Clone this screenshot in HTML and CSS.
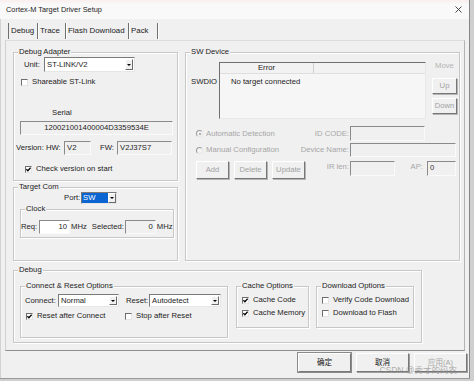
FILE: index.html
```html
<!DOCTYPE html>
<html lang="en">
<head>
  <meta charset="UTF-8">
  <title>Cortex-M Target Driver Setup</title>
  <link rel="stylesheet" href="styles.css">
</head>
<body>
  <div class="window">
    <div class="titlebar">
      <span>Cortex-M Target Driver Setup</span>
      <svg class="close" width="7" height="7" viewBox="0 0 7 7"><path d="M0.5 0.5 L6.5 6.5 M6.5 0.5 L0.5 6.5"/></svg>
    </div>

    <div class="tabs">
      <span class="tab active tab-debug">Debug</span>
      <span class="tab tab-trace">Trace</span>
      <span class="tab tab-flash">Flash Download</span>
      <span class="tab tab-pack">Pack</span>
    </div>

    <div class="panel">
      <div class="columns">
        <div class="col-left">
          <!-- Debug Adapter -->
          <div class="group adapter">
            <span class="legend">Debug Adapter</span>
            <div class="row unit-row">
              <span class="unit-lbl">Unit:</span>
              <div class="select unit-select"><span class="value">ST-LINK/V2</span><span class="arrow"></span></div>
            </div>
            <div class="check share-row"><span class="cb"></span>Shareable ST-Link</div>
            <div class="serial-lbl">Serial</div>
            <div class="field serial">120021001400004D3359534E</div>
            <div class="row version-row">
              <span class="version-lbl">Version: HW:</span>
              <div class="field hw">V2</div>
              <span class="fw-lbl">FW:</span>
              <div class="field fw">V2J37S7</div>
            </div>
            <div class="check verify-row">
              <span class="cb"><svg viewBox="0 0 5 5"><path d="M0.4 2.2 L1.9 3.8 L4.6 0.7"/></svg></span>Check version on start
            </div>
          </div>

          <!-- Target Com -->
          <div class="group target-com">
            <span class="legend">Target Com</span>
            <div class="row port-row">
              <span class="port-lbl">Port:</span>
              <div class="select port-select"><span class="value"><span class="picked">SW</span></span><span class="arrow"></span></div>
            </div>
            <div class="group clock">
              <span class="legend">Clock</span>
              <div class="row req-row">
                <span class="req-lbl">Req:</span>
                <div class="field input num">10</div>
                <span class="unit">MHz</span>
                <span class="sel-lbl">Selected:</span>
                <div class="field num">0</div>
                <span class="unit">MHz</span>
              </div>
            </div>
          </div>
        </div>

        <!-- SW Device -->
        <div class="group sw-device">
          <span class="legend">SW Device</span>
          <div class="sw-top">
            <span class="swdio-lbl">SWDIO</span>
            <div class="sw-table">
              <div class="sw-head"><span class="col-error">Error</span><span class="col-rest"></span></div>
              <div class="sw-line">No target connected</div>
            </div>
            <div class="sw-btns">
              <span class="btn ghost move">Move</span>
              <span class="btn up">Up</span>
              <span class="btn down">Down</span>
            </div>
          </div>
          <div class="sw-row row-a">
            <span class="opt"><span class="rb on"></span>Automatic Detection</span>
            <span class="flbl id-lbl">ID CODE:</span>
            <div class="field id-box"></div>
          </div>
          <div class="sw-row row-b">
            <span class="opt"><span class="rb"></span>Manual Configuration</span>
            <span class="flbl id-lbl">Device Name:</span>
            <div class="field name-box"></div>
          </div>
          <div class="sw-row row-c">
            <span class="opt-btns">
              <span class="btn act">Add</span>
              <span class="btn act">Delete</span>
              <span class="btn act">Update</span>
            </span>
            <span class="flbl ir-lbl">IR len:</span>
            <div class="field ir-box"></div>
            <span class="flbl ap-lbl">AP:</span>
            <div class="field ap-box">0</div>
          </div>
        </div>
      </div>

      <!-- Debug -->
      <div class="group debug">
        <span class="legend">Debug</span>
        <div class="group conn">
          <span class="legend">Connect &amp; Reset Options</span>
          <div class="row conn-row">
            <span class="conn-lbl">Connect:</span>
            <div class="select conn-select"><span class="value">Normal</span><span class="arrow"></span></div>
            <span class="reset-lbl">Reset:</span>
            <div class="select reset-select"><span class="value">Autodetect</span><span class="arrow"></span></div>
          </div>
          <div class="row conn-checks">
            <span class="check first"><span class="cb"><svg viewBox="0 0 5 5"><path d="M0.4 2.2 L1.9 3.8 L4.6 0.7"/></svg></span>Reset after Connect</span>
            <span class="check"><span class="cb"></span>Stop after Reset</span>
          </div>
        </div>
        <div class="group small cache">
          <span class="legend">Cache Options</span>
          <div class="check"><span class="cb"><svg viewBox="0 0 5 5"><path d="M0.4 2.2 L1.9 3.8 L4.6 0.7"/></svg></span>Cache Code</div>
          <div class="check"><span class="cb"><svg viewBox="0 0 5 5"><path d="M0.4 2.2 L1.9 3.8 L4.6 0.7"/></svg></span>Cache Memory</div>
        </div>
        <div class="group small download">
          <span class="legend">Download Options</span>
          <div class="check"><span class="cb"></span>Verify Code Download</div>
          <div class="check"><span class="cb"></span>Download to Flash</div>
        </div>
      </div>
    </div>

    <div class="buttons">
      <span class="btn dlg default">确定</span>
      <span class="btn dlg">取消</span>
      <span class="btn dlg off">应用(A)</span>
    </div>

    <span class="watermark">CSDN @秀才的码农</span>
  </div>
</body>
</html>
```

FILE: styles.css
```css
* {
  box-sizing: border-box;
  margin: 0;
  padding: 0;
}

body {
  background: #cfcfcf;
  font-family: "Liberation Sans", "Noto Sans CJK SC", Arial, sans-serif;
  font-size: 7.7px;
  line-height: 10px;
  color: #1c1c1c;
}

/* Dialog window */
.window {
  position: relative;
  width: 470px;
  height: 379px;
  background: #f0f0f0;
  border-right: 1px solid #858585;
  border-bottom: 1px solid #9a9a9a;
  box-shadow: inset 1px 0 #d2d2d2;
}

.titlebar {
  height: 19px;
  display: flex;
  align-items: center;
  justify-content: space-between;
  padding: 0 6px 0 6px;
  font-size: 7.4px;
  background: linear-gradient(#fbeeee, #f9f9f9 4px);
}

.close {
  margin-right: 1px;
  & path {
    stroke: #333;
    stroke-width: 0.9;
  }
}

/* Tabs */
.tabs {
  height: 21px;
  display: flex;
  align-items: flex-end;
  padding-left: 8px;
  padding-bottom: 1px;
}

.tab {
  height: 16px;
  line-height: 15px;
  padding-left: 2px;
  border-right: 1px solid #6f6f6f;
  box-shadow: 1px 0 #fff;
  font-size: 7.9px;
}

.tab.active {
  border-left: 1px solid #6f6f6f;
}

.tab-debug { width: 30px; }
.tab-trace { width: 28px; }
.tab-flash { width: 63px; }
.tab-pack  { width: 29px; }

.panel {
  margin-left: 5px;
  width: 460px;
  height: 311px;
  border: 1px solid #c4c4c4;
  border-color: #dcdcdc #b4b4b4 #8c8c8c #d0d0d0;
  padding: 11px 0 0 7px;
}

.columns {
  display: flex;
  gap: 7px;
}

.col-left {
  width: 165px;
  display: flex;
  flex-direction: column;
  gap: 6px;
}

/* Etched group boxes */
.group {
  position: relative;
  border: 1px solid #c7c7c7;
  box-shadow: inset 1px 1px 0 #fff, 1px 1px 0 #fff;
}

.legend {
  position: absolute;
  top: -6px;
  left: 4px;
  padding: 0 1px;
  background: #f0f0f0;
  white-space: nowrap;
}

.row {
  display: flex;
  align-items: center;
}

/* Inputs */
.select {
  display: flex;
  background: #fff;
  border: 1px solid;
  border-color: #7a7a7a #e6e6e6 #e6e6e6 #7a7a7a;

  & .value {
    flex: 1;
    padding-left: 2px;
    display: flex;
    align-items: center;
    white-space: nowrap;
    overflow: hidden;
  }

  & .arrow {
    width: 8px;
    margin: 1px;
    background: #f0f0f0;
    border: 1px solid;
    border-color: #fff #6a6a6a #6a6a6a #fff;
    display: flex;
    align-items: center;
    justify-content: center;
  }

  & .arrow::after {
    content: "";
    border-left: 2px solid transparent;
    border-right: 2px solid transparent;
    border-top: 2.5px solid #000;
  }
}

.field {
  height: 14px;
  line-height: 12px;
  padding: 0 2px;
  background: #f0f0f0;
  border: 1px solid;
  border-color: #8a8a8a #fafafa #fafafa #8a8a8a;
  white-space: nowrap;
}

.field.input {
  background: #fff;
}

.field.num {
  text-align: right;
  width: 31px;
}

.check {
  display: flex;
  align-items: center;
  height: 10px;
  white-space: nowrap;
}

.cb {
  width: 7px;
  height: 7px;
  flex: none;
  margin-right: 4px;
  background: #fff;
  border: 1px solid;
  border-color: #6d6d6d #e4e4e4 #e4e4e4 #6d6d6d;

  & svg {
    display: block;
    width: 5px;
    height: 5px;
  }

  & path {
    fill: none;
    stroke: #000;
    stroke-width: 1.3;
  }
}

.rb {
  width: 7px;
  height: 7px;
  margin-right: 3px;
  border-radius: 50%;
  border: 1px solid;
  border-color: #9a9a9a #e6e6e6 #e6e6e6 #9a9a9a;
  background: #f4f4f4;
  display: flex;
  align-items: center;
  justify-content: center;
}

.rb.on::after {
  content: "";
  width: 2px;
  height: 2px;
  border-radius: 50%;
  background: #9a9a9a;
}

.btn {
  display: flex;
  align-items: center;
  justify-content: center;
  background: #f0f0f0;
  border: 1px solid;
  border-color: #fff #777 #777 #fff;
  color: #a3a3a3;
  box-shadow: 1px 1px 0 #b5b5b5;
}

/* Debug Adapter */
.adapter {
  height: 129px;
  padding-top: 4px;
}

.unit-row { padding-left: 10px; }
.unit-lbl { width: 20px; }
.unit-select { width: 91px; height: 15px; }

.share-row {
  margin-top: 5px;
  padding-left: 7px;
}

.serial-lbl {
  margin-top: 21px;
  padding-left: 38px;
}

.serial {
  margin: 3px 0 0 6px;
  width: 153px;
  text-align: center;
}

.version-row {
  margin-top: 6px;
  padding-left: 2px;
}

.version-lbl { width: 48px; }
.hw { width: 27px; }
.fw-lbl { margin-left: 9px; width: 17px; }
.fw { width: 55px; }

.verify-row {
  margin-top: 9px;
  padding-left: 11px;
}

/* Target Com */
.target-com {
  height: 74px;
  padding-top: 4px;
}

.port-row { padding-left: 50px; }
.port-lbl { width: 17px; }
.port-select {
  width: 36px;
  height: 12px;

  & .value { padding-left: 0; }
  & .picked {
    width: 26px;
    height: 10px;
    background: #0a64d2;
    color: #fff;
    padding-left: 1px;
  }
  & .arrow { margin: 0; }
}

.clock {
  margin: 5px 0 0 6px;
  width: 154px;
  height: 29px;
  padding-top: 10px;
}

.req-lbl { width: 18px; }
.unit { margin-left: 1px; }
.sel-lbl { margin-left: 5px; width: 33px; }

/* SW Device */
.sw-device {
  width: 275px;
  height: 209px;
  padding: 9px 0 0 5px;
}

.sw-top {
  display: flex;
  align-items: flex-start;
}

.swdio-lbl {
  width: 28px;
  margin-top: 15px;
}

.sw-table {
  width: 207px;
  height: 57px;
  background: #f6f6f6;
  border: 1px solid;
  border-color: #6f6f6f #e8e8e8 #e8e8e8 #6f6f6f;
}

.sw-head {
  display: flex;
  height: 11px;
  border-bottom: 1px solid #dedede;
  background: #f2f2f2;

  & .col-error {
    width: 94px;
    text-align: center;
    border-right: 1px solid #cfcfcf;
    line-height: 10px;
  }
}

.sw-line {
  margin-top: 3px;
  padding-left: 11px;
}

.sw-btns {
  margin: -2px 0 0 6px;
  width: 25px;
  display: flex;
  flex-direction: column;
}

.btn.move {
  height: 12px;
  border-color: transparent;
  box-shadow: none;
  color: #b4b4b4;
}

.btn.up { height: 16px; margin-top: 6px; }
.btn.down { height: 16px; margin-top: 4px; }

.sw-row {
  display: flex;
  align-items: center;
  color: #a6a6a6;
}

.row-a { margin-top: 7px; height: 15px; }
.row-b { margin-top: 2px; height: 14px; }
.row-c { margin-top: 4px; height: 18px; align-items: flex-start; }

.opt {
  width: 105px;
  padding-left: 5px;
  display: flex;
  align-items: center;
  white-space: nowrap;
}

.flbl {
  text-align: right;
  white-space: nowrap;
}

.id-lbl { width: 53px; margin-right: 1px; }
.id-box { width: 75px; height: 15px; }
.name-box { width: 106px; height: 14px; }

.opt-btns {
  width: 114px;
  padding-left: 5px;
  display: flex;
  gap: 5px;

  & .btn {
    width: 33px;
    height: 18px;
  }
}

.ir-lbl { width: 44px; margin-right: 1px; line-height: 12px; }
.ir-box { width: 45px; height: 15px; }
.ap-lbl { width: 32px; padding-right: 4px; line-height: 12px; }
.ap-box { width: 29px; height: 15px; color: #333; }

/* Debug */
.debug {
  margin-top: 9px;
  width: 409px;
  height: 73px;
  padding: 15px 0 0 6px;
  display: flex;
  align-items: flex-start;
}

.conn {
  width: 208px;
  height: 52px;
  padding: 7px 0 0 4px;
}

.conn-lbl { width: 33px; }
.conn-select { width: 61px; height: 13px; }
.reset-lbl { margin-left: 7px; width: 23px; }
.reset-select { width: 72px; height: 13px; }

.conn-checks {
  margin-top: 4px;
  padding-left: 1px;

  & .first { width: 99px; }
}

.small {
  height: 42px;
  padding: 8px 0 0 5px;

  & .check + .check {
    margin-top: 3px;
  }
}

.cache {
  margin-left: 8px;
  width: 73px;
}

.download {
  margin-left: 7px;
  width: 98px;

  & .check {
    overflow: hidden;
  }
}

/* Dialog buttons */
.buttons {
  display: flex;
  gap: 5px;
  margin-top: 2px;
  padding-left: 298px;
}

.btn.dlg {
  width: 53px;
  height: 19px;
  color: #151515;
  font-size: 7.5px;
  box-shadow: 1px 1px 0 #a0a0a0;
}

.btn.default {
  outline: 1px solid #8a8a8a;
}

.btn.off {
  color: #a8a8a8;
}

.watermark {
  position: absolute;
  right: 12px;
  bottom: 3px;
  font-size: 8.5px;
  line-height: 10px;
  color: rgba(140, 140, 140, 0.7);
  white-space: nowrap;
}
```
